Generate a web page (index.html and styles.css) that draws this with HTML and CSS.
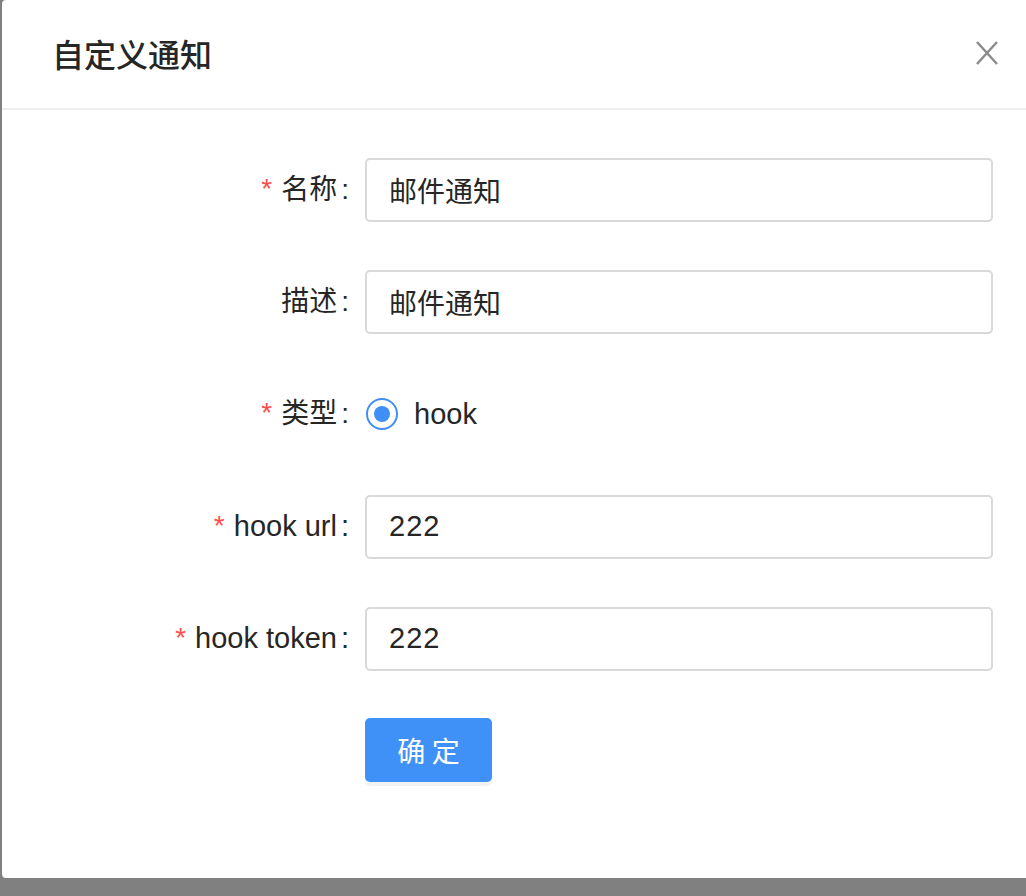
FILE: index.html
```html
<!DOCTYPE html>
<html lang="zh-CN">
<head>
<meta charset="utf-8">
<title>自定义通知</title>
<link rel="stylesheet" href="styles.css">
</head>
<body>
<div class="modal">
  <div class="modal-header">
    <div class="modal-title">自定义通知</div>
    <button class="modal-close" type="button" aria-label="关闭">
      <svg width="22" height="24" viewBox="0 0 22 24"><path d="M1 1 L21 23 M21 1 L1 23" stroke="#8a8a8a" stroke-width="2.4" fill="none"/></svg>
    </button>
  </div>
  <div class="modal-body">
    <form class="form">
      <div class="form-row">
        <label class="form-label"><span class="req">*</span>名称</label>
        <div class="form-control"><input class="input" value="邮件通知"></div>
      </div>
      <div class="form-row">
        <label class="form-label">描述</label>
        <div class="form-control"><input class="input" value="邮件通知"></div>
      </div>
      <div class="form-row">
        <label class="form-label"><span class="req">*</span>类型</label>
        <div class="form-control">
          <span class="radio"><span class="radio-circle"><span class="radio-dot"></span></span><span class="radio-text latin">hook</span></span>
        </div>
      </div>
      <div class="form-row">
        <label class="form-label latin"><span class="req">*</span>hook url</label>
        <div class="form-control"><input class="input latin" value="222"></div>
      </div>
      <div class="form-row">
        <label class="form-label latin"><span class="req">*</span>hook token</label>
        <div class="form-control"><input class="input latin" value="222"></div>
      </div>
      <div class="form-row">
        <div class="form-spacer"></div>
        <div class="form-control"><button class="btn-primary" type="button">确 定</button></div>
      </div>
    </form>
  </div>
</div>
</body>
</html>
```
FILE: styles.css
```css
html, body {
  margin: 0;
  padding: 0;
  overflow: hidden;
  height: 100%;
}
body {
  background: #808080;
  font-family: "Liberation Sans", "Noto Sans CJK SC", sans-serif;
  color: #262626;
}
.modal {
  margin-left: 2px;
  width: 1040px;
  height: 878px;
  background: #fff;
  border-radius: 4px;
  box-sizing: border-box;
}
.modal-header {
  height: 110px;
  box-sizing: border-box;
  padding: 0 33px 0 50px;
  border-bottom: 2px solid #eeeeee;
  display: flex;
  align-items: center;
  justify-content: space-between;
}
.modal-title {
  font-family: "Noto Sans CJK SC", sans-serif;
  font-size: 32px;
  font-weight: 500;
  line-height: 44px;
  color: #262626;
  padding-bottom: 2px;
}
.modal-close {
  width: 44px;
  height: 44px;
  border: 0;
  background: transparent;
  padding: 0;
  display: flex;
  align-items: center;
  justify-content: center;
  margin-bottom: 2px;
}
.modal-body {
  padding: 48px 48px 0 48px;
}
.form {
  display: flex;
  flex-direction: column;
  gap: 48px;
}
.form-row {
  display: grid;
  grid-template-columns: 315px 628px;
  height: 64px;
  align-items: center;
}
.form-label {
  text-align: right;
  font-size: 28px;
  line-height: 64px;
  padding-right: 16px;
  white-space: nowrap;
  color: #262626;
}
.form-label::after {
  content: ":";
  margin-left: 4px;
}
.latin {
  font-size: 29px;
}
.req {
  color: #ff4d4f;
  font-family: "Liberation Sans", sans-serif;
  font-size: 28px;
  margin-right: 9px;
  position: relative;
  top: -1px;
}
.form-control {
  display: flex;
  align-items: center;
  height: 64px;
}
.input {
  width: 100%;
  height: 64px;
  box-sizing: border-box;
  border: 2px solid #d9d9d9;
  border-radius: 5px;
  padding: 0 22px;
  font-family: "Liberation Sans", "Noto Sans CJK SC", sans-serif;
  font-size: 28px;
  color: #262626;
  background: #fff;
  outline: none;
}
.input.latin {
  font-size: 29px;
  letter-spacing: 1px;
}
.radio {
  display: inline-flex;
  align-items: center;
  padding-left: 1px;
}
.radio-circle {
  width: 32px;
  height: 32px;
  box-sizing: border-box;
  border: 2px solid #3f8ff7;
  border-radius: 50%;
  display: flex;
  align-items: center;
  justify-content: center;
}
.radio-dot {
  width: 16px;
  height: 16px;
  border-radius: 50%;
  background: #3f8ff7;
}
.radio-text {
  margin-left: 16px;
  color: #262626;
}
.btn-primary {
  height: 64px;
  width: 127px;
  border: 0;
  border-radius: 5px;
  background: #3f91f7;
  color: #fff;
  font-family: "Noto Sans CJK SC", sans-serif;
  font-size: 28px;
  box-shadow: 0 4px 0 rgba(0, 0, 0, 0.05);
  padding: 0;
}
```
